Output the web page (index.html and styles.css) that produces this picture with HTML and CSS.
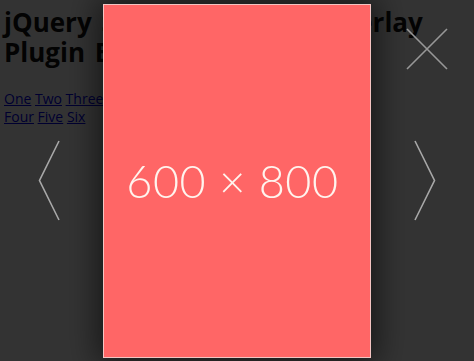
FILE: index.html
```html
<!DOCTYPE html>
<html lang="en">
<head>
<meta charset="utf-8">
<title>jQuery Simple Lightbox Overlay Plugin Example</title>
<link rel="stylesheet" href="styles.css">
</head>
<body>
<div class="page">
  <h1 class="title">jQuery Simple Lightbox Overlay Plugin Example</h1>
  <nav class="links">
    <a href="#">One</a> <a href="#">Two</a> <a href="#">Three</a>
    <a href="#">Four</a> <a href="#">Five</a> <a href="#">Six</a>
  </nav>
</div>
<div class="overlay">
  <button class="nav-btn prev" aria-label="Previous">
    <svg width="22" height="81" viewBox="0 0 22 81"><polyline points="21,1 1.5,40.5 21,80" fill="none" stroke="#a8a8a8" stroke-width="1.6"/></svg>
  </button>
  <div class="frame">
    <span class="frame-label">600 × 800</span>
  </div>
  <button class="nav-btn next" aria-label="Next">
    <svg width="22" height="81" viewBox="0 0 22 81"><polyline points="1,1 20.5,40.5 1,80" fill="none" stroke="#a8a8a8" stroke-width="1.6"/></svg>
  </button>
  <button class="close-btn" aria-label="Close">
    <svg width="42" height="42" viewBox="0 0 42 42"><path d="M1 1 L41 41 M41 1 L1 41" fill="none" stroke="#979797" stroke-width="1.6"/></svg>
  </button>
</div>
</body>
</html>
```
FILE: styles.css
```css
html, body {
  margin: 0;
  padding: 0;
  background: #ffffff;
}
body {
  font-family: "Open Sans", "Noto Sans", sans-serif;
  color: #000;
}
.page {
  padding: 7px 4px 0 4px;
}
.title {
  margin: 0;
  font-size: 26px;
  line-height: 30px;
  font-weight: 700;
  word-spacing: 3px;
  color: #111;
}
.links {
  margin-top: 23px;
  width: 104px;
  font-size: 14px;
  line-height: 18px;
}
.links a {
  color: #0000ee;
}
.overlay {
  position: fixed;
  inset: 0;
  background: rgba(0, 0, 0, 0.8);
  display: flex;
  align-items: center;
  justify-content: center;
  gap: 43px;
}
.nav-btn, .close-btn {
  background: none;
  border: 0;
  padding: 0;
  margin: 0;
  display: block;
  line-height: 0;
}
.nav-btn svg, .close-btn svg { display: block; }
.frame {
  box-sizing: border-box;
  width: 268px;
  height: 354px;
  background: #ff6666;
  border: 1px solid #f3c4c2;
  box-shadow: 0 0 30px 6px rgba(0, 0, 0, 0.55);
  display: flex;
  align-items: center;
  justify-content: center;
}
.frame-label {
  font-family: "Lato", "Open Sans", sans-serif;
  font-weight: 300;
  font-size: 45px;
  letter-spacing: 0.6px;
  color: #fff4ee;
  margin-right: 9px;
  margin-top: 1px;
}
.close-btn {
  position: absolute;
  top: 28px;
  left: 406px;
}
```
